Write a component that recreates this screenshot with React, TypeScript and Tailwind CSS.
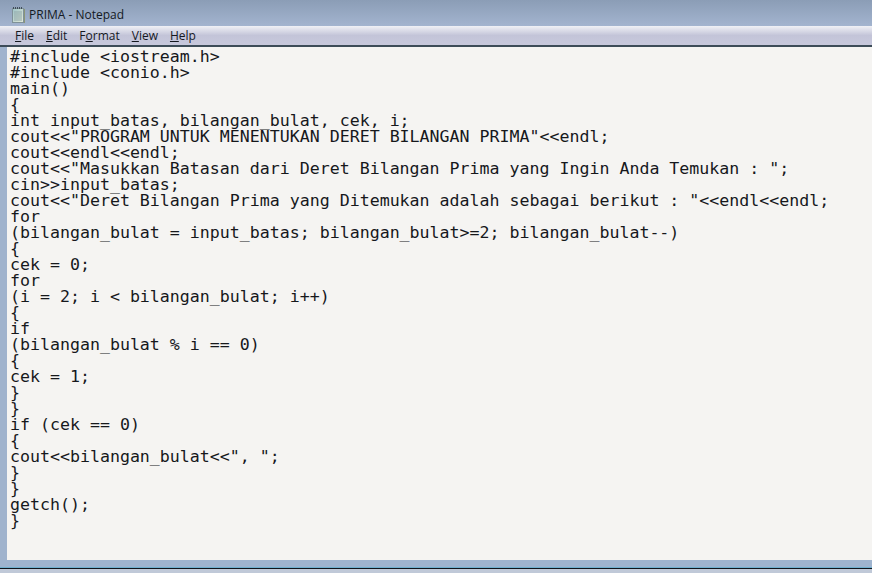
import React from 'react';

const code = `#include <iostream.h>
#include <conio.h>
main()
{
int input_batas, bilangan_bulat, cek, i;
cout<<"PROGRAM UNTUK MENENTUKAN DERET BILANGAN PRIMA"<<endl;
cout<<endl<<endl;
cout<<"Masukkan Batasan dari Deret Bilangan Prima yang Ingin Anda Temukan : ";
cin>>input_batas;
cout<<"Deret Bilangan Prima yang Ditemukan adalah sebagai berikut : "<<endl<<endl;
for
(bilangan_bulat = input_batas; bilangan_bulat>=2; bilangan_bulat--)
{
cek = 0;
for
(i = 2; i < bilangan_bulat; i++)
{
if
(bilangan_bulat % i == 0)
{
cek = 1;
}
}
if (cek == 0)
{
cout<<bilangan_bulat<<", ";
}
}
getch();
}`;

const menus = [
  { pre: '', key: 'F', post: 'ile' },
  { pre: '', key: 'E', post: 'dit' },
  { pre: 'F', key: 'o', post: 'rmat' },
  { pre: '', key: 'V', post: 'iew' },
  { pre: '', key: 'H', post: 'elp' },
];

const NotepadIcon = () => (
  <svg width="15" height="16" viewBox="0 0 15 16" className="shrink-0">
    <defs>
      <linearGradient id="page" x1="0" y1="0" x2="1" y2="1">
        <stop offset="0" stopColor="#9fc4c8" />
        <stop offset="1" stopColor="#e4ead8" />
      </linearGradient>
    </defs>
    <rect x="1.5" y="1.5" width="11" height="14" fill="url(#page)" stroke="#7f9198" />
    <path d="M2 1h10" stroke="#3f4c58" strokeDasharray="1 1" strokeWidth="2" />
    <path d="M3 5h8M3 7h8M3 9h8M3 11h8M3 13h8" stroke="#8fa6a8" />
    <rect x="13" y="2" width="1" height="14" fill="#8b9678" />
  </svg>
);

export default function App() {
  return (
    <div className="flex h-[573px] w-[872px] flex-col overflow-hidden bg-[#a0b3cd] font-['Open_Sans',sans-serif]">
      <div className="flex h-[26px] items-center gap-[3px] bg-gradient-to-b from-[#8b9db6] to-[#a3b4cf] pl-[11px] pt-[3px] text-[12px] text-[#141a24]">
        <NotepadIcon />
        <span>PRIMA - Notepad</span>
      </div>
      <div className="flex min-h-0 flex-1 flex-col pl-[7px]">
        <div className="-ml-[7px] flex h-[21px] items-center gap-[12px] border-b-2 border-[#3d4c58] bg-gradient-to-b from-[#f0f1f6] via-[#c3c4d8] to-[#c7c8dc] pl-[15px] text-[12px] text-[#15181f]">
          {menus.map((m) => (
            <span key={m.pre + m.key + m.post}>
              {m.pre}
              <span className="underline">{m.key}</span>
              {m.post}
            </span>
          ))}
        </div>
        <pre className="min-h-0 flex-1 overflow-hidden bg-[#f5f4f2] pl-[3px] pt-[2px] font-['DejaVu_Sans_Mono',monospace] text-[16.6px] leading-[16px] text-[#16181c]">
          {code}
        </pre>
        <div className="-ml-[7px] h-[7px] bg-[#9fb4cf]" />
      </div>
      <div className="h-[1px] bg-[#6fb0cf]" />
      <div className="h-[1px] bg-[#10151c]" />
      <div className="h-[4px] bg-[#c0c9d8]" />
    </div>
  );
}
